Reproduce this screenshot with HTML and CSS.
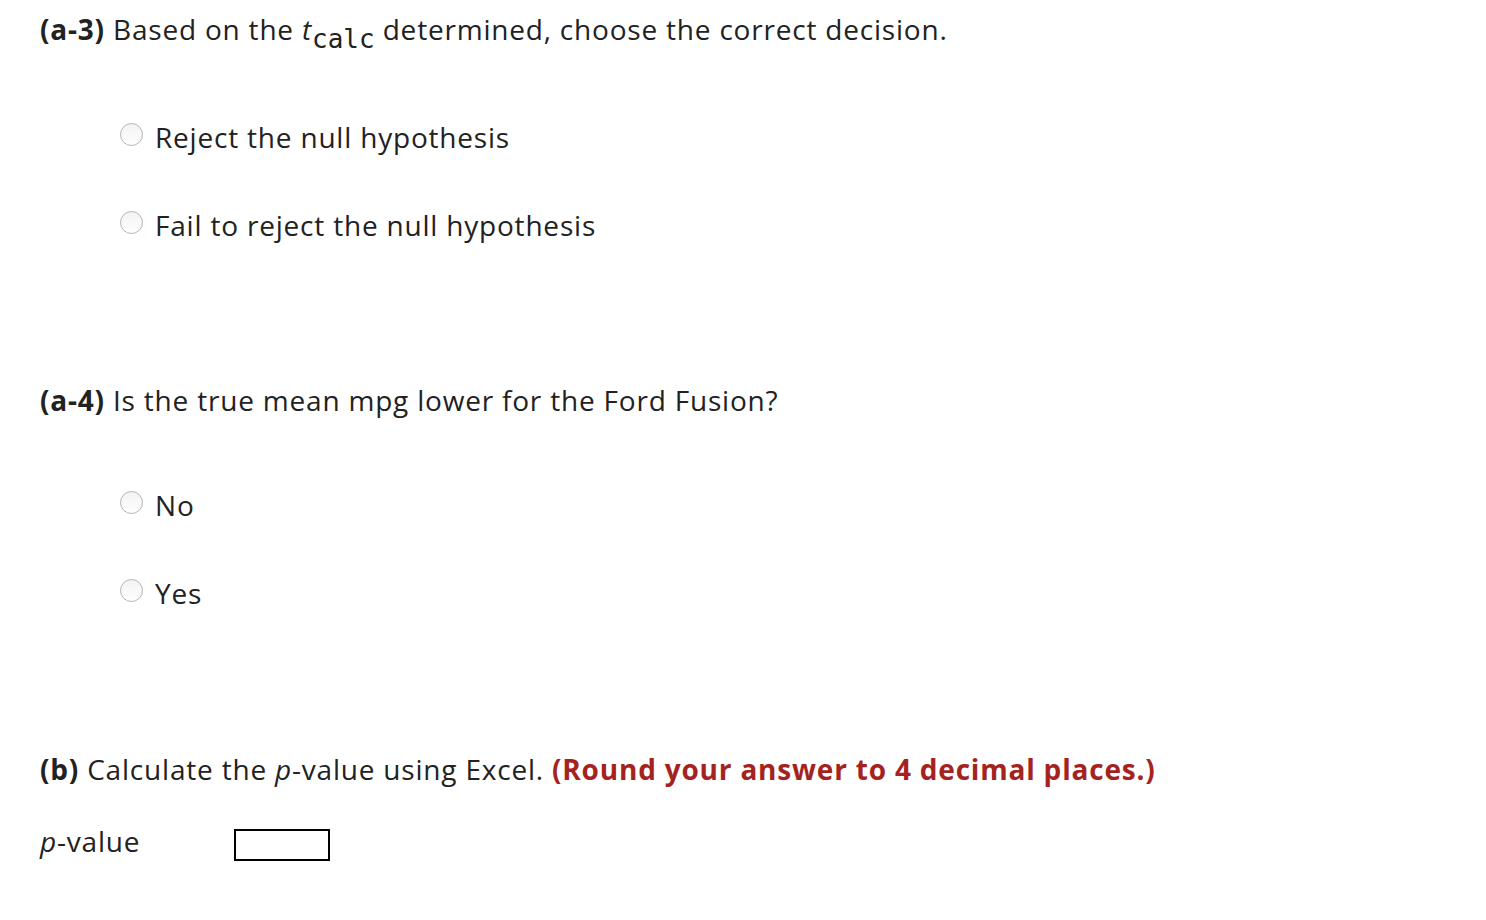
FILE: index.html
```html
<!DOCTYPE html>
<html>
<head>
<meta charset="utf-8">
<link rel="stylesheet" href="styles.css">
</head>
<body>
<div class="page">
  <section class="part part-a3">
    <p class="prompt"><b>(a-3)</b> Based on the <span class="var"><i>t</i><sub class="mono">calc</sub></span> determined, choose the correct decision.</p>
    <ul class="options">
      <li class="option"><span class="radio"></span><span class="label">Reject the null hypothesis</span></li>
      <li class="option"><span class="radio"></span><span class="label">Fail to reject the null hypothesis</span></li>
    </ul>
  </section>
  <section class="part part-a4">
    <p class="prompt"><b>(a-4)</b> Is the true mean mpg lower for the Ford Fusion?</p>
    <ul class="options">
      <li class="option"><span class="radio"></span><span class="label">No</span></li>
      <li class="option"><span class="radio"></span><span class="label">Yes</span></li>
    </ul>
  </section>
  <section class="part part-b">
    <p class="prompt"><b>(b)</b> Calculate the <i>p</i>-value using Excel. <b class="note">(Round your answer to 4 decimal places.)</b></p>
    <div class="answer-row">
      <span class="answer-label"><i>p</i>-value</span>
      <span class="answer-box"></span>
    </div>
  </section>
</div>
</body>
</html>
```

FILE: styles.css
```css
html, body {
  margin: 0;
  padding: 0;
  background: #fff;
}
body {
  font-family: "Open Sans", "Lato", sans-serif;
  font-size: 28px;
  letter-spacing: 0.8px;
  color: #222;
}
.page {
  padding: 9px 0 0 40px;
}
.prompt {
  margin: 0;
  line-height: 40px;
}
.prompt b {
  font-weight: 700;
}
.var i {
  font-style: italic;
}
.mono {
  font-family: "DejaVu Sans Mono", monospace;
  font-size: 26px;
  letter-spacing: 0;
  vertical-align: -8px;
  line-height: 0;
}
.options {
  list-style: none;
  margin: 0;
  padding: 0 0 0 80px;
}
.option {
  display: flex;
  align-items: center;
  height: 88px;
}
.part-a3 .options {
  margin-top: 44px;
}
.part-a4 .options {
  margin-top: 41px;
}
.radio {
  width: 21px;
  height: 21px;
  border-radius: 50%;
  border: 1px solid #b4b4b4;
  background: linear-gradient(#f2f2f2, #fff);
  margin-right: 12px;
  margin-top: -6px;
  flex: none;
}
.part-a4 {
  margin-top: 111px;
}
.part-b {
  margin-top: 112px;
}
.note {
  color: #a5231f;
}
.answer-row {
  display: flex;
  align-items: center;
  margin-top: 32px;
}
.answer-label {
  width: 194px;
}
.answer-box {
  width: 92px;
  height: 28px;
  border: 2px solid #000;
  margin-top: 8px;
}
```
